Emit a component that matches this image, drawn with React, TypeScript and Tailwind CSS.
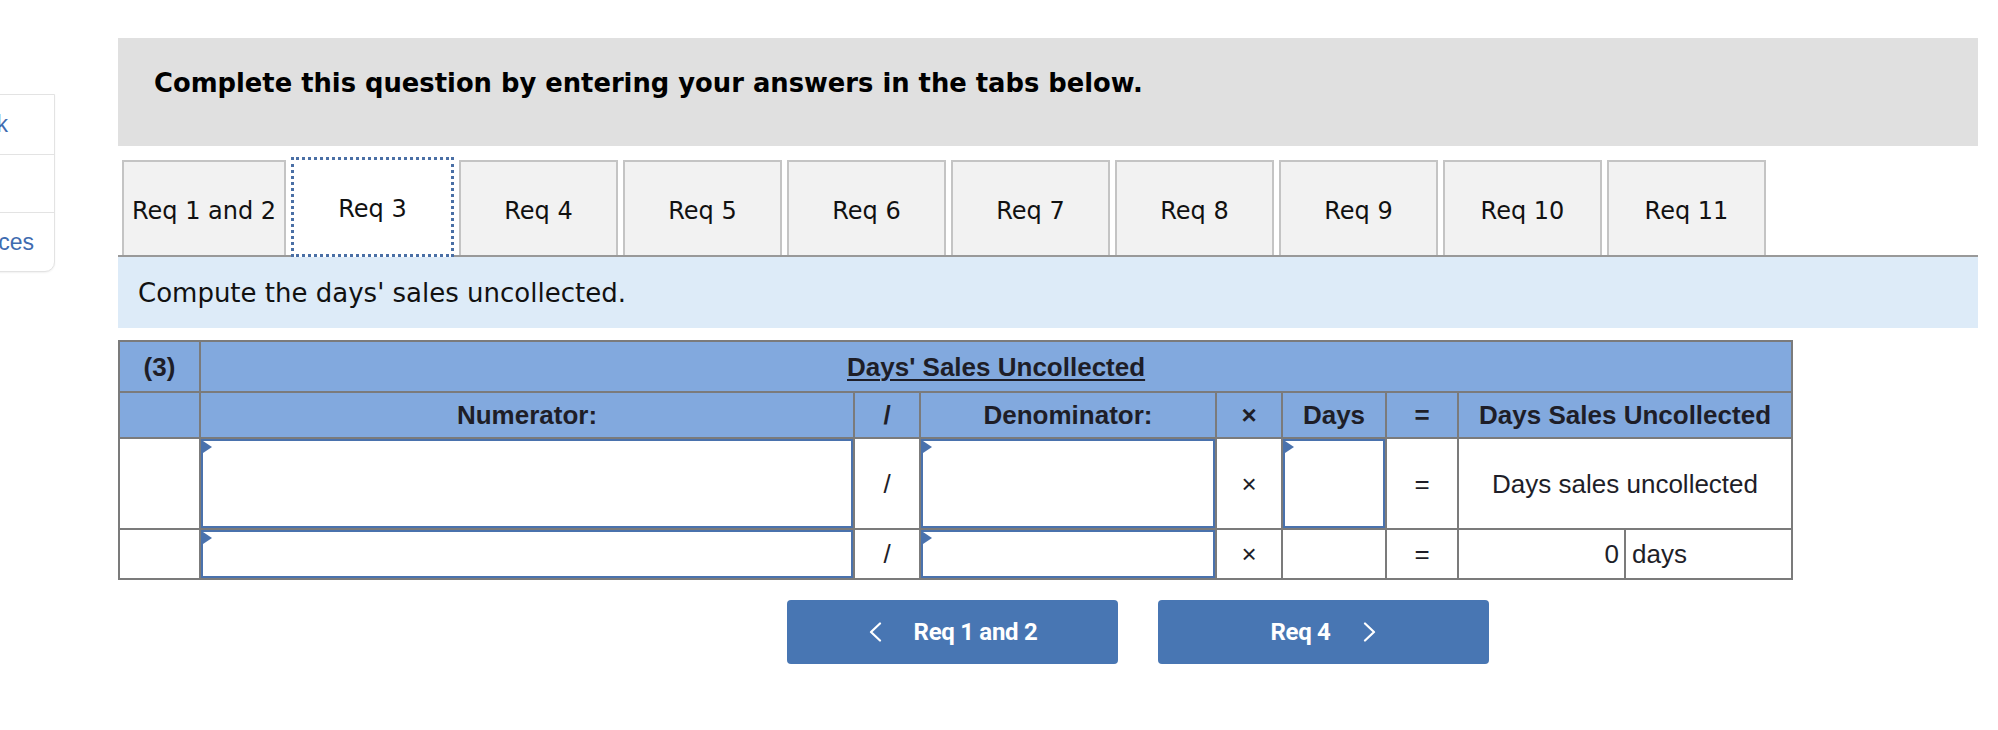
import React from "react";

const Tri = () => (
  <div className="absolute top-0 left-0 w-0 h-0 border-y-[6px] border-y-transparent border-l-[9px] border-l-[#4a72ad]" />
);

const InputBox = ({ h }: { h: string }) => (
  <div className={`relative w-full ${h} border-2 border-[#4a72ad] bg-white`}>
    <Tri />
  </div>
);

const tabs = ["Req 1 and 2", "Req 3", "Req 4", "Req 5", "Req 6", "Req 7", "Req 8", "Req 9", "Req 10", "Req 11"];

export default function App() {
  const cell = "border-2 border-[#7b7b7b] p-0 align-middle";
  const hdr = "border-2 border-[#7b7b7b] bg-[#82a9de] font-bold text-center align-middle";
  return (
    <div className="w-[1998px] h-[730px] bg-white overflow-hidden flex text-[#111]">
      {/* sidebar */}
      <div className="w-[118px] shrink-0">
        <div className="mt-[94px] -ml-[100px] w-[155px] bg-white border border-[#e3e3e3] rounded-br-[10px] shadow-[0_1px_2px_rgba(0,0,0,0.06)] text-[23px] text-[#3f6cb0] font-['Liberation_Sans',sans-serif]">
          <div className="h-[60px] flex items-center justify-end pr-[46px] border-b border-[#e3e3e3]">eBook</div>
          <div className="h-[58px] flex items-center justify-end pr-[80px] border-b border-[#e3e3e3]">Hint</div>
          <div className="h-[58px] flex items-center justify-end pr-[20px]">References</div>
        </div>
      </div>

      {/* main */}
      <div className="w-[1860px] shrink-0 mt-[38px]">
        <div className="h-[108px] bg-[#e0e0e0] pl-[36px] pt-[30px]">
          <div className="font-['DejaVu_Sans',sans-serif] font-bold text-[25.8px] leading-[30px] text-black">
            Complete this question by entering your answers in the tabs below.
          </div>
        </div>

        {/* tabs */}
        <div className="mt-[11px] flex items-end gap-[5px] pl-[4px] border-b-2 border-[#999999] font-['DejaVu_Sans',sans-serif] text-[24px] text-[#111]">
          {tabs.map((t, i) =>
            i === 1 ? (
              <div
                key={t}
                className="relative z-10 -mb-[2px] w-[163px] h-[100px] pt-[3px] bg-white border-[3px] border-dotted border-[#4a6fa5] flex items-center justify-center"
              >
                {t}
              </div>
            ) : (
              <div
                key={t}
                className={`${i === 0 ? "w-[164px]" : "w-[159px]"} h-[95px] pt-[4px] bg-[#f2f2f2] border-2 border-b-0 border-[#c4c4c4] flex items-center justify-center`}
              >
                {t}
              </div>
            )
          )}
        </div>

        <div className="h-[71px] bg-[#ddebf8] pl-[20px] pt-[21px]">
          <div className="font-['DejaVu_Sans',sans-serif] text-[26px] leading-[30px] text-[#111]">
            Compute the days' sales uncollected.
          </div>
        </div>

        {/* table */}
        <table className="mt-[12px] border-collapse table-fixed w-[1673px] font-['Liberation_Sans',Arial,sans-serif] text-[26px] leading-[30px] text-[#1e1e28]">
          <colgroup>
            <col className="w-[81px]" />
            <col className="w-[654px]" />
            <col className="w-[66px]" />
            <col className="w-[296px]" />
            <col className="w-[66px]" />
            <col className="w-[104px]" />
            <col className="w-[72px]" />
            <col className="w-[167px]" />
            <col className="w-[167px]" />
          </colgroup>
          <tbody>
            <tr>
              <td className={`${hdr} h-[51px]`}>(3)</td>
              <td className={hdr} colSpan={8}>
                <span className="underline decoration-[2px] underline-offset-[3px]">Days' Sales Uncollected</span>
              </td>
            </tr>
            <tr>
              <td className={`${hdr} h-[46px]`}></td>
              <td className={hdr}>Numerator:</td>
              <td className={hdr}>/</td>
              <td className={hdr}>Denominator:</td>
              <td className={hdr}>×</td>
              <td className={hdr}>Days</td>
              <td className={hdr}>=</td>
              <td className={hdr} colSpan={2}>Days Sales Uncollected</td>
            </tr>
            <tr>
              <td className={cell}></td>
              <td className={cell}><InputBox h="h-[89px]" /></td>
              <td className={`${cell} text-center`}>/</td>
              <td className={cell}><InputBox h="h-[89px]" /></td>
              <td className={`${cell} text-center`}>×</td>
              <td className={cell}><InputBox h="h-[89px]" /></td>
              <td className={`${cell} text-center`}>=</td>
              <td className={`${cell} text-center`} colSpan={2}>Days sales uncollected</td>
            </tr>
            <tr>
              <td className={cell}></td>
              <td className={cell}><InputBox h="h-[48px]" /></td>
              <td className={`${cell} text-center`}>/</td>
              <td className={cell}><InputBox h="h-[48px]" /></td>
              <td className={`${cell} text-center`}>×</td>
              <td className={cell}></td>
              <td className={`${cell} text-center`}>=</td>
              <td className={`${cell} text-right pr-[5px]`}>0</td>
              <td className={`${cell} text-left pl-[6px]`}>days</td>
            </tr>
          </tbody>
        </table>

        {/* nav buttons */}
        <div className="mt-[20px] ml-[669px] flex gap-[40px] font-['Roboto',sans-serif] font-bold text-[24px] text-white">
          <button className="w-[331px] h-[64px] rounded-[4px] bg-[#4876b3] flex items-center justify-center gap-[32px]">
            <svg width="14" height="20" viewBox="0 0 14 20" fill="none">
              <path d="M12 1.5 L3 10 L12 18.5" stroke="white" strokeWidth="2.2" strokeLinecap="round" strokeLinejoin="round" />
            </svg>
            <span className="tracking-[-0.3px]">Req 1 and 2</span>
          </button>
          <button className="w-[331px] h-[64px] rounded-[4px] bg-[#4876b3] flex items-center justify-center gap-[32px]">
            <span className="tracking-[-0.3px]">Req 4</span>
            <svg width="14" height="20" viewBox="0 0 14 20" fill="none">
              <path d="M2 1.5 L11 10 L2 18.5" stroke="white" strokeWidth="2.2" strokeLinecap="round" strokeLinejoin="round" />
            </svg>
          </button>
        </div>
      </div>
    </div>
  );
}
